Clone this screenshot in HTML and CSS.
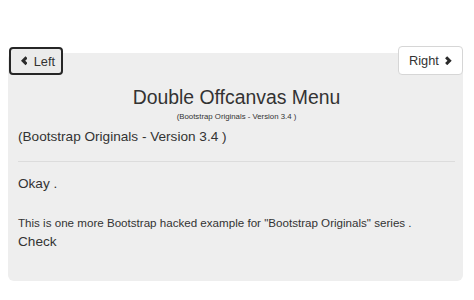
FILE: index.html
```html
<!DOCTYPE html>
<html lang="en">
<head>
<meta charset="utf-8">
<title>Double Offcanvas Menu</title>
<link rel="stylesheet" href="styles.css">
</head>
<body>
<div class="page">
  <div class="toggles">
    <button class="btn btn-left" type="button">
      <svg class="chev" width="6.7" height="9.4" viewBox="0 0 6.7 9"><polygon points="0,4.5 4.5,0 6.62,2.12 4.24,4.5 6.62,6.88 4.5,9" fill="#2b2b2b"/></svg>
      <span>Left</span>
    </button>
    <button class="btn btn-right" type="button">
      <span>Right</span>
      <svg class="chev" width="6.7" height="9.4" viewBox="0 0 6.7 9"><polygon points="6.7,4.5 2.2,0 0.08,2.12 2.46,4.5 0.08,6.88 2.2,9" fill="#2b2b2b"/></svg>
    </button>
  </div>
  <div class="jumbotron">
    <h1 class="title">Double Offcanvas Menu</h1>
    <div class="subtitle">(Bootstrap Originals - Version 3.4 )</div>
    <p class="lead">(Bootstrap Originals - Version 3.4 )</p>
    <hr class="rule">
    <p class="okay">Okay .</p>
    <p class="desc">This is one more Bootstrap hacked example for "Bootstrap Originals" series .</p>
    <div class="check">Check</div>
  </div>
</div>
</body>
</html>
```
FILE: styles.css
```css
html, body {
  margin: 0;
  padding: 0;
  background: #fff;
}
body {
  font-family: "Liberation Sans", Arial, Helvetica, sans-serif;
  color: #333;
}
.page {
  padding: 46px 11px 0 8px;
}
.toggles {
  display: flex;
  justify-content: space-between;
  align-items: flex-start;
  position: relative;
  z-index: 2;
}
.btn {
  display: inline-flex;
  align-items: center;
  box-sizing: border-box;
  font-family: inherit;
  font-size: 12.8px;
  color: #333;
  margin: 0;
  cursor: pointer;
  border-radius: 4px;
}
.btn-left {
  margin: 1px 0 0 1px;
  width: 54px;
  height: 28px;
  padding: 0 0 0 9.5px;
  gap: 6.5px;
  background: #ebebeb;
  border: 2px solid #262626;
}
.btn-right {
  width: 65px;
  height: 29px;
  padding: 0 0 0 10px;
  gap: 6.5px;
  background: #fff;
  border: 1px solid #d6d6d6;
}
.chev {
  display: block;
  flex: none;
}
.jumbotron {
  position: relative;
  z-index: 1;
  margin-top: -22px;
  background: #eee;
  border-radius: 6px;
  padding: 32px 8px 28.7px 10px;
}
.title {
  margin: 0;
  text-align: center;
  font-size: 19.4px;
  line-height: 24px;
  font-weight: normal;
}
.subtitle {
  text-align: center;
  font-size: 7.8px;
  line-height: 15px;
}
.lead {
  margin: 3.3px 0 0;
  font-size: 13.6px;
  line-height: 20px;
}
.rule {
  margin: 13.7px 0 0;
  border: 0;
  border-top: 1px solid #dcdcdc;
  height: 0;
}
.okay {
  margin: 11.6px 0 0;
  font-size: 13.6px;
  line-height: 20px;
}
.desc {
  margin: 20.9px 0 0;
  font-size: 11.6px;
  line-height: 17px;
}
.check {
  margin-top: 0.8px;
  font-size: 13.6px;
  line-height: 20px;
}
```
